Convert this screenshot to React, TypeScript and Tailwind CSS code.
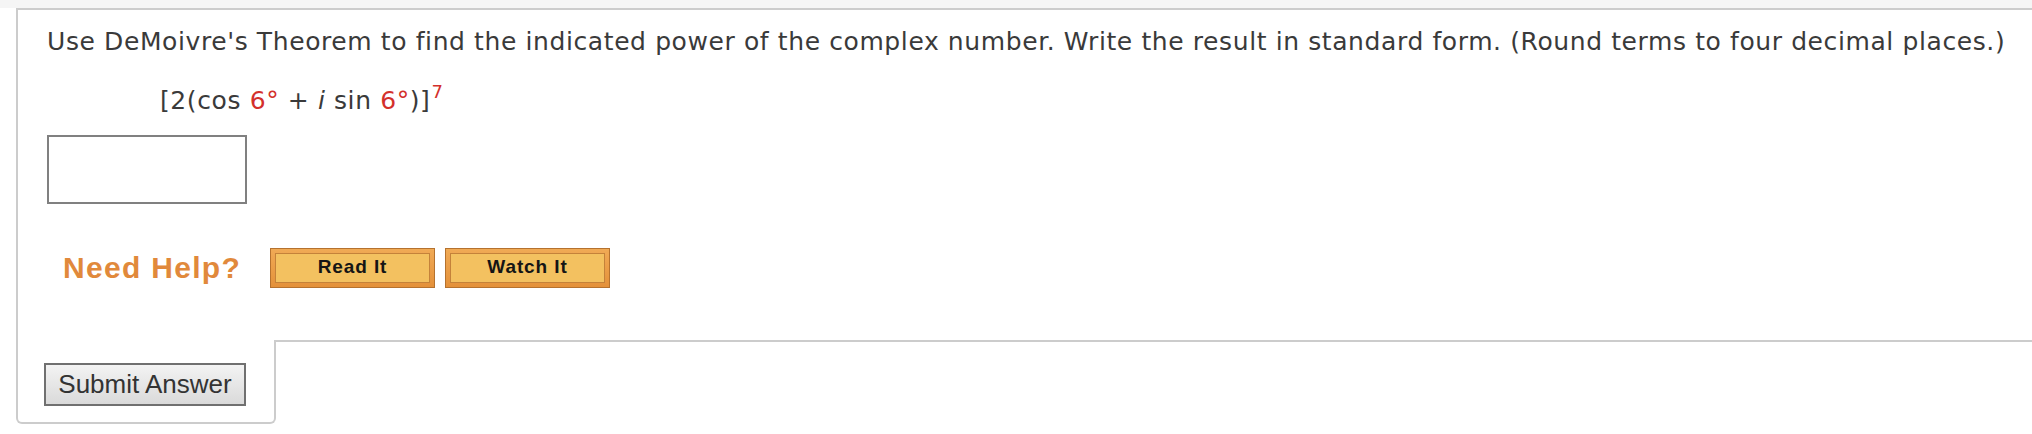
import React from "react";

function HelpButton({ label }: { label: string }) {
  return (
    <div className="h-[40px] w-[165px] border border-[#b5722f] bg-gradient-to-b from-[#f0aa55] to-[#e4913a] p-[4px]">
      <div className="flex h-full w-full items-center justify-center border border-[#c4823a] bg-[#f3c160] font-['Liberation_Sans',Arial,sans-serif] text-[19px] font-bold tracking-[0.9px] text-[#151515]">
        {label}
      </div>
    </div>
  );
}

export default function App() {
  return (
    <div className="min-h-[434px] w-[2032px] overflow-hidden bg-white">
      <div className="h-[8px] bg-[#f5f5f5]" />
      <div className="ml-[16px] mr-[-20px]">
        <div className="border-l-2 border-t-2 border-[#cccccc] pb-[50px] pl-[29px] pt-[14px] font-['DejaVu_Sans',Verdana,sans-serif] text-[#3a3a3a]">
          <p className="text-[25px] leading-[36px] tracking-[0.6px] whitespace-nowrap">
            Use DeMoivre's Theorem to find the indicated power of the complex number. Write the result in standard form. (Round terms to four decimal places.)
          </p>
          <p className="mt-[23px] pl-[113px] text-[25px] leading-[36px] tracking-[0.6px] whitespace-nowrap">
            [2(cos <span className="text-[#d3302b]">6°</span> + <i>i</i> sin{" "}
            <span className="text-[#d3302b]">6°</span>)]
            <span className="relative top-[-11px] ml-[1px] text-[18px] leading-none text-[#d3302b]">7</span>
          </p>
          <div className="mt-[16px] h-[69px] w-[200px] border-2 border-[#808080] bg-white" />
          <div className="mt-[41px] flex items-center">
            <span className="ml-[16px] w-[207px] font-['Liberation_Sans',Arial,sans-serif] text-[30px] font-bold tracking-[1.3px] text-[#e1893b]">
              Need Help?
            </span>
            <HelpButton label="Read It" />
            <div className="w-[10px]" />
            <HelpButton label="Watch It" />
          </div>
        </div>
        <div className="flex">
          <div className="w-[260px] rounded-b-[6px] border-b-2 border-l-2 border-r-2 border-[#cccccc] pb-[16px] pl-[26px] pt-[23px]">
            <button className="flex h-[43px] w-[202px] items-center justify-center border-2 border-[#707070] bg-gradient-to-b from-[#f3f3f3] to-[#dadada] font-['Liberation_Sans',Arial,sans-serif] text-[26px] text-[#333333]">
              Submit Answer
            </button>
          </div>
          <div className="flex-1 border-t-2 border-[#cccccc]" />
        </div>
      </div>
    </div>
  );
}
